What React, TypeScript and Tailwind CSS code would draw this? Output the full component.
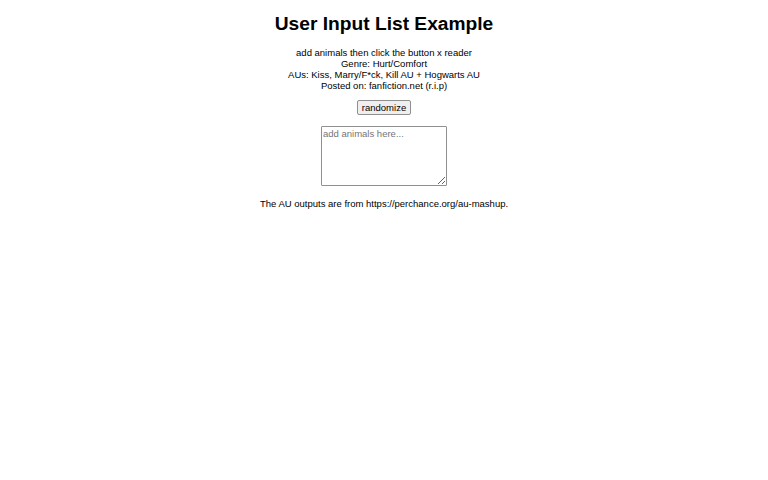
export default function App() {
  return (
    <div className="min-h-[480px] bg-white text-center text-black font-['Liberation_Sans',Arial,sans-serif] text-[9.5px] leading-[11px]">
      <h1 className="pt-[13px] mb-[12px] text-[19.2px] leading-[22px] font-bold">User Input List Example</h1>

      <p className="m-0">
        add animals then click the button x reader
        <br />
        Genre: Hurt/Comfort
        <br />
        AUs: Kiss, Marry/F*ck, Kill AU + Hogwarts AU
        <br />
        Posted on: fanfiction.net (r.i.p)
      </p>

      <div className="mt-[9px]">
        <button
          type="button"
          className="h-[15px] px-[4px] text-[9.5px] leading-[13px] bg-[#efefef] border border-[#8f8f8f] rounded-[2px] font-['Liberation_Sans',Arial,sans-serif]"
        >
          randomize
        </button>
      </div>

      <div className="mt-[11px] flex justify-center">
        <textarea
          placeholder="add animals here..."
          className="block w-[126px] h-[60px] p-[1px] text-[9.5px] leading-[11px] border border-[#8f8f8f] rounded-[1px] placeholder:text-[#757575] font-['Liberation_Sans',Arial,sans-serif] outline-none"
        />
      </div>

      <p className="mt-[12px]">The AU outputs are from https://perchance.org/au-mashup.</p>
    </div>
  );
}
